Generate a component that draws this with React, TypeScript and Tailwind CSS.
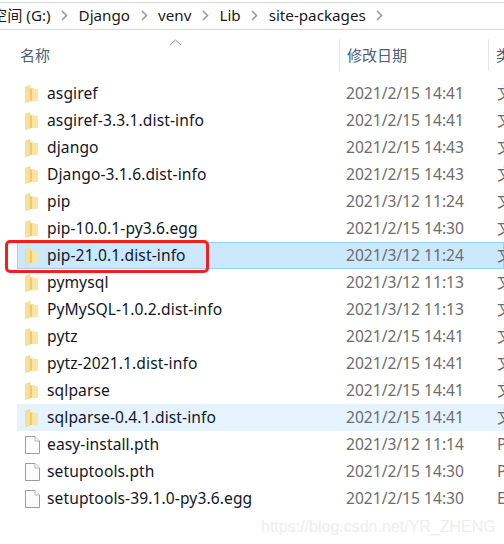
const crumbs = ["Django", "venv", "Lib", "site-packages"];

type Row = {
  name: string;
  date: string;
  type: string;
  file?: boolean;
  state?: "selected" | "hover";
};

const rows: Row[] = [
  { name: "asgiref", date: "2021/2/15 14:41", type: "文" },
  { name: "asgiref-3.3.1.dist-info", date: "2021/2/15 14:41", type: "文" },
  { name: "django", date: "2021/2/15 14:43", type: "文" },
  { name: "Django-3.1.6.dist-info", date: "2021/2/15 14:43", type: "文" },
  { name: "pip", date: "2021/3/12 11:24", type: "文" },
  { name: "pip-10.0.1-py3.6.egg", date: "2021/2/15 14:30", type: "文" },
  { name: "pip-21.0.1.dist-info", date: "2021/3/12 11:24", type: "文", state: "selected" },
  { name: "pymysql", date: "2021/3/12 11:13", type: "文" },
  { name: "PyMySQL-1.0.2.dist-info", date: "2021/3/12 11:13", type: "文" },
  { name: "pytz", date: "2021/2/15 14:41", type: "文" },
  { name: "pytz-2021.1.dist-info", date: "2021/2/15 14:41", type: "文" },
  { name: "sqlparse", date: "2021/2/15 14:41", type: "文" },
  { name: "sqlparse-0.4.1.dist-info", date: "2021/2/15 14:41", type: "文", state: "hover" },
  { name: "easy-install.pth", date: "2021/3/12 11:14", type: "P", file: true },
  { name: "setuptools.pth", date: "2021/2/15 14:30", type: "P", file: true },
  { name: "setuptools-39.1.0-py3.6.egg", date: "2021/2/15 14:30", type: "E", file: true },
];

function Chevron() {
  return (
    <svg width="7" height="11" viewBox="0 0 7 11" className="shrink-0">
      <path d="M1 1l4.5 4.5L1 10" fill="none" stroke="#9a9a9a" strokeWidth="1.6" />
    </svg>
  );
}

function FolderIcon() {
  return (
    <svg width="13" height="18" viewBox="0 0 13 18" className="shrink-0">
      <path d="M0.5 2L5 0.5V16.5L0.5 17.5Z" fill="#f6e09a" stroke="#ecd588" strokeWidth="0.6" />
      <path d="M5 3H8.5L9.5 4H13V16H5Z" fill="#fce5a3" />
      <path d="M5 3V16H7V4Z" fill="#eccb70" />
    </svg>
  );
}

function FileIcon() {
  return (
    <svg width="15" height="18" viewBox="0 0 15 18" className="shrink-0">
      <path d="M0.5 0.5H10L14.5 5V17.5H0.5Z" fill="#fbfbfb" stroke="#9c9c9c" />
      <path d="M10 0.5V5H14.5" fill="#fff" stroke="#b5b5b5" />
    </svg>
  );
}

function FileRow({ row }: { row: Row }) {
  const tone =
    row.state === "selected"
      ? "bg-[#cce8ff] shadow-[inset_0_0_0_1px_#99d1ff]"
      : row.state === "hover"
        ? "bg-[#e5f3ff]"
        : "";

  return (
    <div className={`ml-[17px] flex h-[27px] items-center pl-[8px] ${tone}`}>
      <div className="flex w-[22px] shrink-0 items-center">
        {row.file ? <FileIcon /> : <FolderIcon />}
      </div>
      <div className="w-[299px] shrink-0 text-[15.6px] tracking-[0.1px] whitespace-nowrap text-[#111827]">{row.name}</div>
      <div className="w-[151px] shrink-0 text-[15.6px] whitespace-nowrap text-[#6d6d6d]">{row.date}</div>
      <div className="text-[15.6px] whitespace-nowrap text-[#6d6d6d]">{row.type}</div>
    </div>
  );
}

export default function App() {
  return (
    <div className="relative h-[544px] w-[504px] overflow-hidden bg-white font-['Noto_Sans','Noto_Sans_CJK_SC',sans-serif]">
      <div className="mt-[2px] flex h-[28px] items-center gap-[10.5px] border-y border-[#d9d9d9] pb-px text-[15.2px] whitespace-nowrap text-[#1a1a1a]">
        <span className="-ml-[8px]">空间 (G:)</span>
        {crumbs.map((crumb) => (
          <div key={crumb} className="flex items-center gap-[10.5px]">
            <Chevron />
            <span>{crumb}</span>
          </div>
        ))}
        <Chevron />
      </div>

      <div className="relative mt-[9px] flex h-[32px] items-center">
        <svg width="13" height="7" viewBox="0 0 13 7" className="absolute top-0 left-[169px]">
          <path d="M1 6l5.5-5L12 6" fill="none" stroke="#8f8f8f" />
        </svg>
        <span className="ml-[20px] w-[319px] shrink-0 text-[15px] text-[#4c607a]">名称</span>
        <div className="flex h-full w-[149px] shrink-0 items-center border-l border-[#e5e5e5] pl-[7px] text-[15px] text-[#4c607a]">
          修改日期
        </div>
        <div className="flex h-full items-center border-l border-[#e5e5e5] pl-[7px] text-[15px] whitespace-nowrap text-[#4c607a]">
          类型
        </div>
      </div>

      <div className="mt-[9px]">
        {rows.map((row) => (
          <FileRow key={row.name} row={row} />
        ))}
      </div>

      {/* red annotation drawn over the selected row */}
      <div className="absolute top-[240px] left-[5px] h-[33px] w-[204px] rounded-[5px] border-[3px] border-[#f0201c]" />

      <span className="absolute top-[515px] left-[261px] font-['Liberation_Sans',sans-serif] text-[16px] whitespace-nowrap text-[#eeeeee]">
        https://blog.csdn.net/YR_ZHENG
      </span>
    </div>
  );
}
